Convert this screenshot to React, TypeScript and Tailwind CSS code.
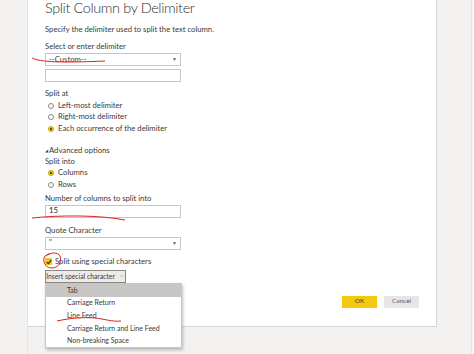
import { ChevronDown } from "lucide-react";

const font = { fontFamily: 'Lato, "Open Sans", sans-serif' };

function Radio({ label, checked }: { label: string; checked?: boolean }) {
  return (
    <div className="flex h-[11.5px] items-center pl-[3px]">
      <span
        className={`mr-[4px] flex h-[6px] w-[6px] items-center justify-center rounded-full border ${
          checked ? "border-[#c8a800] bg-[#f2c811]" : "border-[#8a8886] bg-white"
        }`}
      >
        {checked && <span className="h-[2px] w-[2px] rounded-full bg-[#252423]" />}
      </span>
      <span>{label}</span>
    </div>
  );
}

function Select({ value }: { value: string }) {
  return (
    <div className="flex h-[13px] w-[136px] items-center justify-between border border-[#c8c6c4] px-[3px]">
      <span>{value}</span>
      <span className="text-[5px] leading-none text-[#605e5c]">▼</span>
    </div>
  );
}

export default function App() {
  return (
    <div
      className="flex h-[354px] w-[474px] overflow-hidden bg-[#f3f2f1] text-[7.7px] leading-none text-[#3b3a39]"
      style={font}
    >
      <div className="w-[28px] shrink-0 border-r border-[#e6e4e2] bg-[#f3f2f1]" />
      <div className="relative flex h-[327px] w-[409px] shrink-0 flex-col border-r border-b border-[#d6d4d2] bg-white pl-[17px]">
        <div className="-mt-[3px] h-[22px] whitespace-nowrap text-[14.5px] font-light leading-[21px] tracking-[-0.4px] text-[#323130]">
          Split Column by Delimiter
        </div>
        <div className="mt-[4px] flex h-[14px] items-center">
          Specify the delimiter used to split the text column.
        </div>
        <div className="mt-[4px] flex h-[12px] items-center">Select or enter delimiter</div>
        <Select value="--Custom--" />
        <div className="mt-[3px] h-[13px] w-[136px] border border-[#c8c6c4]" />
        <div className="mt-[6px] flex h-[12px] items-center">Split at</div>
        <Radio label="Left-most delimiter" />
        <Radio label="Right-most delimiter" />
        <Radio label="Each occurrence of the delimiter" checked />
        <div className="mt-[10px] flex h-[12px] items-center">
          <span className="mr-[1px] text-[4px]">◢</span>Advanced options
        </div>
        <div className="flex h-[11px] items-center">Split into</div>
        <Radio label="Columns" checked />
        <Radio label="Rows" />
        <div className="mt-[2px] flex h-[12px] items-center">Number of columns to split into</div>
        <div className="flex h-[13px] w-[136px] items-center border border-[#c8c6c4] px-[3px] text-[#252423]">
          15
        </div>
        <div className="mt-[7px] flex h-[12px] items-center">Quote Character</div>
        <Select value={'"'} />
        <div className="mt-[6px] flex h-[12px] items-center">
          <span className="mr-[3px] flex h-[7px] w-[7px] items-center justify-center bg-[#f2c811]">
            <svg width="6" height="6" viewBox="0 0 6 6">
              <path d="M0.8 3.2 L2.3 4.6 L5.2 1.2" stroke="#252423" strokeWidth="1.1" fill="none" />
            </svg>
          </span>
          Split using special characters
        </div>
        <div className="mt-[2px] flex h-[13px] w-[81px] items-center justify-center gap-[4px] whitespace-nowrap border border-[#8a8886] bg-[#edebe9] text-[6.8px]">
          Insert special character
          <ChevronDown size={6} strokeWidth={2} className="text-[#8a8886]" />
        </div>
        <div className="mt-[13px] flex justify-end gap-[7px] pr-[17px]">
          <div className="flex h-[12px] w-[35px] items-center justify-center bg-[#f2c811] text-[6.5px]">OK</div>
          <div className="flex h-[12px] w-[35px] items-center justify-center bg-[#e6e6e6] text-[6.5px] text-[#605e5c]">Cancel</div>
        </div>

        <div className="absolute left-[17px] top-[283px] w-[137px] border border-[#c8c6c4] bg-white text-[7px] shadow-[1px_2px_3px_rgba(0,0,0,0.25)]">
          <div className="flex h-[12.6px] items-center bg-[#c8c6c4] pl-[21px]">Tab</div>
          <div className="flex h-[12.6px] items-center pl-[21px]">Carriage Return</div>
          <div className="flex h-[12.6px] items-center pl-[21px]">Line Feed</div>
          <div className="flex h-[12.6px] items-center pl-[21px]">Carriage Return and Line Feed</div>
          <div className="flex h-[12.6px] items-center pl-[21px]">Non-breaking Space</div>
        </div>

        <svg className="pointer-events-none absolute left-[-28px] top-0" width="200" height="354">
          <path d="M32 58 C40 62 60 63 105 61" stroke="#e0201e" strokeWidth="1" fill="none" />
          <path d="M32 218 C60 215 100 215 125 220" stroke="#e0201e" strokeWidth="1" fill="none" />
          <path
            d="M46 256 C50 252 58 252 60 256 C62 262 58 268 52 268 C46 268 43 263 44 258 C45 255 48 254 50 254"
            stroke="#e0201e"
            strokeWidth="1"
            fill="none"
          />
          <path d="M57 321 C70 318 85 317 95 318 C105 319 112 322 121 321" stroke="#e0201e" strokeWidth="1" fill="none" />
        </svg>
      </div>
      <div className="w-[35px] shrink-0 border-r border-[#e6e4e2] bg-[#f3f2f1]" />
      <div className="flex-1 bg-[#f8f8f8]" />
    </div>
  );
}
